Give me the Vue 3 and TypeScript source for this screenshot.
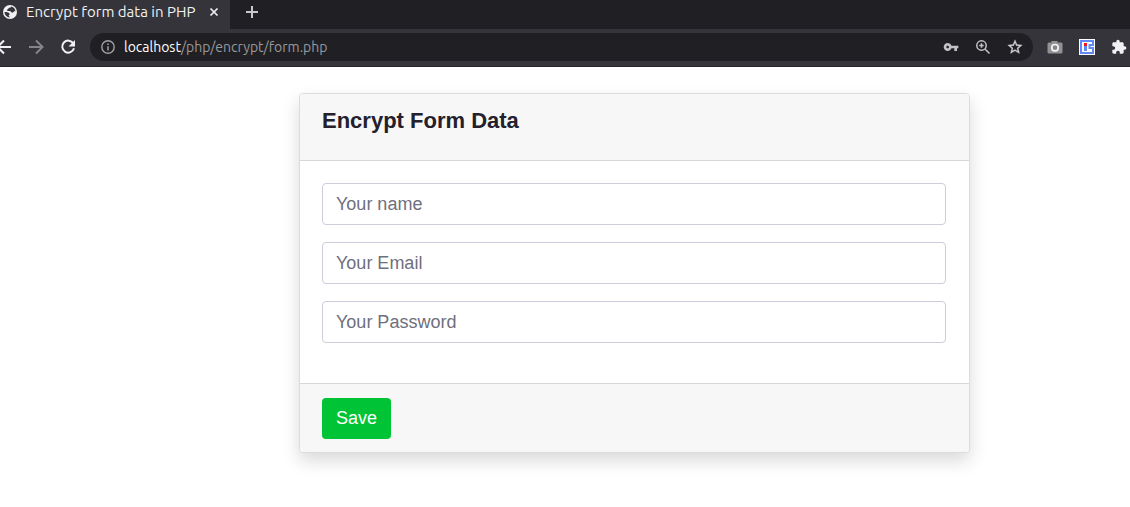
<script setup lang="ts">
import { ref } from 'vue'

interface Field {
  id: string
  type: string
  placeholder: string
}

const fields: Field[] = [
  { id: 'name', type: 'text', placeholder: 'Your name' },
  { id: 'email', type: 'email', placeholder: 'Your Email' },
  { id: 'password', type: 'password', placeholder: 'Your Password' },
]

const values = ref<Record<string, string>>({ name: '', email: '', password: '' })
</script>

<template>
  <div class="browser">
    <header class="chrome">
      <div class="tabs">
        <div class="tab">
          <svg class="globe" viewBox="0 0 14 14" aria-hidden="true">
            <circle cx="7" cy="7" r="7" fill="#f1f1f3" />
            <path d="M8.500 1.600C8 2.800 6.500 2.600 5.600 3.200 5.300 4.200 4.200 4.300 3.800 5c.2 1.100 1.700 1.100 2.900 1 1.200 0 1.300 1.200 2.200 1.600 1 .3 1.300-.6 2-1.200.5-.4 1-.3 1.500-.1C12.200 4 10.800 2.200 8.500 1.600z" fill="#35343a" />
            <path d="M1.500 7c1.500-.1 3.300.200 4.500 1.100 1.100.8.8 1.900-.3 2.200-.2.900.7 1.200 1.300 2.100C4 12.400 1.500 10 1.500 7z" fill="#35343a" />
          </svg>
          <span class="tab-title">Encrypt form data in PHP</span>
          <button class="icon-button close" type="button" aria-label="Close tab">
            <svg viewBox="0 0 10 10"><path d="M1.500 1.500l7 7M8.500 1.500l-7 7" stroke="#f1f1f3" stroke-width="1.700" /></svg>
          </button>
        </div>
        <button class="icon-button new-tab" type="button" aria-label="New tab">
          <svg viewBox="0 0 14 14"><path d="M7 1v12M1 7h12" stroke="#c9c9cc" stroke-width="2" /></svg>
        </button>
      </div>
      <div class="toolbar">
        <nav class="nav">
          <button class="icon-button back" type="button" aria-label="Back">
            <svg viewBox="0 0 16 16"><path d="M15 8H2M8 1.500L1.500 8 8 14.500" fill="none" stroke="#f1f1f3" stroke-width="2" /></svg>
          </button>
          <button class="icon-button" type="button" aria-label="Forward">
            <svg viewBox="0 0 16 16"><path d="M1 8h13M8 1.500L14.500 8 8 14.500" fill="none" stroke="#85858a" stroke-width="2" /></svg>
          </button>
          <button class="icon-button" type="button" aria-label="Reload">
            <svg viewBox="0 0 16 16">
              <path d="M13.300 4.400A6 6 0 1 0 14 9.300" fill="none" stroke="#f1f1f3" stroke-width="2" />
              <path d="M15 1v6.500H8.500z" fill="#f1f1f3" />
            </svg>
          </button>
        </nav>
        <div class="address">
          <svg class="info" viewBox="0 0 14 14" aria-hidden="true">
            <circle cx="7" cy="7" r="6.200" fill="none" stroke="#a0a0a5" stroke-width="1.400" />
            <path d="M7 6.200v4.300M7 3.500v1.500" stroke="#a0a0a5" stroke-width="1.500" />
          </svg>
          <span class="url"><span class="host">localhost</span>/php/encrypt/form.php</span>
          <div class="address-actions">
            <button class="icon-button" type="button" aria-label="Saved passwords">
              <svg viewBox="0 0 24 24"><path fill="#c3c3c7" d="M12.650 10C11.830 7.670 9.610 6 7 6c-3.310 0-6 2.690-6 6s2.690 6 6 6c2.610 0 4.830-1.670 5.650-4H17v4h4v-4h2v-4H12.650zM7 14c-1.100 0-2-.9-2-2s.9-2 2-2 2 .9 2 2-.9 2-2 2z" /></svg>
            </button>
            <button class="icon-button" type="button" aria-label="Zoom">
              <svg viewBox="0 0 16 16">
                <circle cx="6.500" cy="6.500" r="4.700" fill="none" stroke="#c3c3c7" stroke-width="1.500" />
                <path d="M10 10l4.500 4.500M6.500 4.300v4.400M4.300 6.500h4.400" stroke="#c3c3c7" stroke-width="1.500" />
              </svg>
            </button>
            <button class="icon-button" type="button" aria-label="Bookmark">
              <svg viewBox="1 1 22 22"><path fill="#d0d0d3" stroke="#d0d0d3" stroke-width=".4" d="M22 9.240l-7.190-.620L12 2 9.190 8.630 2 9.240l5.460 4.730L5.820 21 12 17.270 18.180 21l-1.630-7.030L22 9.240zM12 15.400l-3.760 2.270 1-4.280-3.320-2.880 4.380-.380L12 6.100l1.710 4.040 4.380.380-3.320 2.880 1 4.280L12 15.400z" /></svg>
            </button>
          </div>
        </div>
        <div class="extensions">
          <button class="icon-button" type="button" aria-label="Screenshot">
            <svg viewBox="0 0 16 16">
              <path d="M2 3.500h2.500V2h6v1.500H14A1.500 1.500 0 0 1 15.500 5v8a1.500 1.500 0 0 1-1.500 1.500H2A1.500 1.500 0 0 1 .500 13V5A1.500 1.500 0 0 1 2 3.500z" fill="#929294" />
              <circle cx="8" cy="8.700" r="3.200" fill="#858587" stroke="#f4f4f4" stroke-width="1.700" />
            </svg>
          </button>
          <button class="icon-button" type="button" aria-label="Image capture">
            <svg viewBox="0 0 16 16">
              <path d="M0 0h16v16H0z" fill="#fff" />
              <path d="M14 5V2H2v12h12V9h-3.500V6H15" fill="none" stroke="#6189f5" stroke-width="2" />
              <path d="M5 7h3v5H5z" fill="#6189f5" />
              <path d="M5 4h3v3H5z" fill="#f01818" />
            </svg>
          </button>
          <button class="icon-button" type="button" aria-label="Extensions">
            <svg viewBox="0 0 24 24"><path fill="#f1f1f3" d="M20.500 11H19V7c0-1.100-.9-2-2-2h-4V3.500C13 2.120 11.880 1 10.500 1S8 2.120 8 3.500V5H4c-1.100 0-1.990.9-1.990 2v3.800H3.500c1.490 0 2.700 1.210 2.700 2.700s-1.210 2.700-2.700 2.700H2V20c0 1.100.9 2 2 2h3.800v-1.500c0-1.490 1.210-2.700 2.700-2.700s2.700 1.210 2.700 2.700V22H17c1.100 0 2-.9 2-2v-4h1.500c1.380 0 2.500-1.120 2.500-2.500S21.880 11 20.500 11z" /></svg>
          </button>
        </div>
      </div>
    </header>

    <main class="page">
      <form class="card" @submit.prevent>
        <div class="card-header">
          <h1>Encrypt Form Data</h1>
        </div>
        <div class="card-body">
          <input
            v-for="field in fields"
            :key="field.id"
            v-model="values[field.id]"
            class="field"
            :type="field.type"
            :name="field.id"
            :placeholder="field.placeholder"
            :aria-label="field.placeholder"
          />
        </div>
        <div class="card-footer">
          <button class="save" type="submit">Save</button>
        </div>
      </form>
    </main>
  </div>
</template>

<style>
body {
  margin: 0;
  background: #fff;
}
</style>

<style scoped>
.browser,
.browser * {
  box-sizing: border-box;
}

.chrome {
  font-family: Ubuntu, "Noto Sans", sans-serif;
  background: #202024;
}

.icon-button {
  display: flex;
  flex: none;
  width: 16px;
  height: 16px;
  padding: 0;
  border: 0;
  background: none;
}

.icon-button svg {
  display: block;
  width: 100%;
  height: 100%;
}

.tabs {
  display: flex;
  align-items: center;
  height: 29px;
}

.tab {
  display: flex;
  align-items: center;
  width: 230px;
  height: 29px;
  padding: 0 11px 5px 3px;
  background: #35343a;
}

.globe {
  flex: none;
  width: 14px;
  height: 14px;
  margin-right: 9px;
}

.tab-title {
  flex: 1;
  color: #f1f1f3;
  font-size: 15px;
  line-height: 24px;
  white-space: nowrap;
}

.close {
  width: 10px;
  height: 10px;
}

.new-tab {
  width: 14px;
  height: 14px;
  margin: 0 0 5px 15px;
}

.toolbar {
  display: flex;
  align-items: center;
  gap: 14px;
  height: 38px;
  padding: 0 3px 2px 0;
  border-bottom: 1px solid #242328;
  background: #35343a;
}

.nav {
  display: flex;
  gap: 16px;
}

.back {
  margin-left: -4px;
}

.address {
  display: flex;
  flex: 1;
  align-items: center;
  height: 28px;
  padding: 0 10px 0 11px;
  border-radius: 14px;
  background: #202024;
}

.info {
  flex: none;
  width: 14px;
  height: 14px;
  margin-right: 9px;
}

.url {
  flex: 1;
  color: #98989d;
  font-size: 14px;
  line-height: 20px;
}

.host {
  color: #fff;
}

.address-actions {
  display: flex;
  gap: 16px;
}

.extensions {
  display: flex;
  gap: 16px;
}

.page {
  padding: 26px 160px 54px 299px;
}

.card {
  border: 1px solid #dcdcdf;
  border-radius: 4px;
  background: #fff;
  box-shadow: 0 8px 18px rgba(0, 0, 0, 0.15);
  font-family: "Liberation Sans", Arial, sans-serif;
}

.card-header {
  height: 67px;
  padding: 14px 22px;
  border-bottom: 1px solid #d8d8da;
  border-radius: 3px 3px 0 0;
  background: #f7f7f7;
}

h1 {
  margin: 0;
  color: #24202c;
  font-size: 22px;
  font-weight: 700;
  line-height: 26px;
}

.card-body {
  display: flex;
  flex-direction: column;
  gap: 17px;
  padding: 22px 23px 40px 22px;
}

.field {
  width: 100%;
  height: 42px;
  padding: 0 13px;
  border: 1px solid #cdcddb;
  border-radius: 4px;
  background: #fff;
  color: #495057;
  font-family: inherit;
  font-size: 18px;
}

.field::placeholder {
  color: #6f6f7d;
  opacity: 1;
}

.card-footer {
  padding: 14px 22px 13px;
  border-top: 1px solid #d8d8da;
  border-radius: 0 0 3px 3px;
  background: #f7f7f7;
}

.save {
  display: block;
  height: 41px;
  padding: 0 14px;
  border: 0;
  border-radius: 4px;
  background: #00c435;
  color: #fff;
  font-family: inherit;
  font-size: 18px;
}
</style>
